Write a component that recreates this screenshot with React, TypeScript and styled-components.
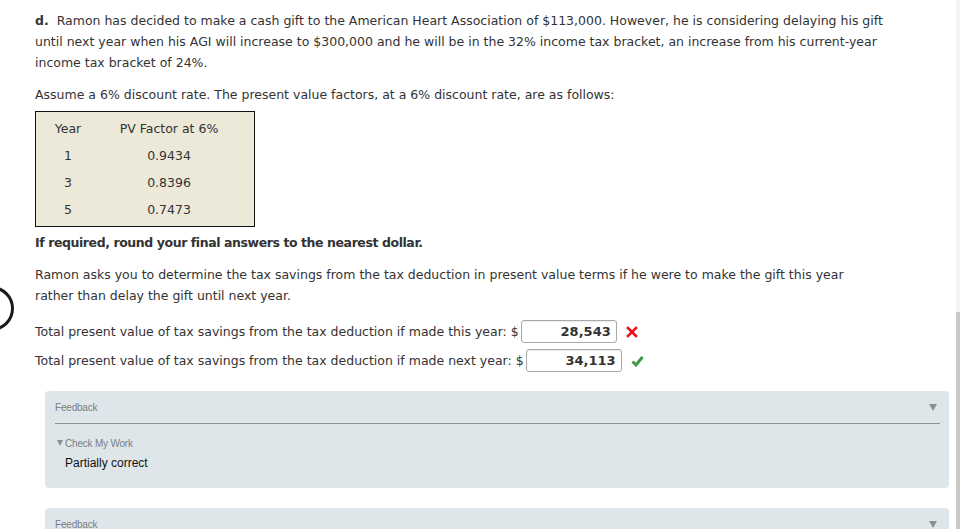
import React from "react";
import styled, { createGlobalStyle } from "styled-components";

const Global = createGlobalStyle`
  html, body { margin: 0; padding: 0; background: #ffffff; }
  body { font-family: "DejaVu Sans", Verdana, sans-serif; color: #333333; }
`;

const Page = styled.div`
  position: relative;
  width: 960px;
  height: 529px;
  overflow: hidden;
  box-sizing: border-box;
  padding: 10px 11px 0 35px;
`;

const Para = styled.p<{ $gap?: number; $bold?: boolean }>`
  margin: 0 0 ${(p) => p.$gap ?? 11}px 0;
  font-size: 12.5px;
  line-height: 21px;
  font-weight: ${(p) => (p.$bold ? 700 : 400)};
  letter-spacing: ${(p) => (p.$bold ? "-0.42px" : "0")};
  color: #333;
  width: 870px;
`;

const Table = styled.div`
  display: grid;
  grid-template-columns: 64px 138px;
  grid-auto-rows: 27px;
  width: 218px;
  padding: 3px 0;
  border: 1px solid #111;
  background: #ece9d8;
  font-size: 12.5px;
  margin-bottom: 5px;
`;

const Cell = styled.div`
  display: flex;
  align-items: center;
  justify-content: center;
`;

const AnswerRow = styled.div`
  display: flex;
  align-items: center;
  height: 29px;
  font-size: 12.5px;
`;

const Input = styled.div`
  box-sizing: border-box;
  width: 96px;
  height: 23px;
  margin-left: 2px;
  border: 1px solid #a9a9a9;
  border-radius: 3px;
  box-shadow: inset 0 1px 1px rgba(0, 0, 0, 0.08);
  display: flex;
  align-items: center;
  justify-content: flex-end;
  padding-right: 5px;
  font-weight: 700;
  font-size: 13px;
  color: #333;
  background: #fff;
`;

const Mark = styled.span`
  margin-left: 9px;
  display: flex;
  align-items: center;
`;

const Panel = styled.div`
  margin: 16px 0 20px 10px;
  background: #dfe6ea;
  border-radius: 4px;
  padding: 8px 9px 16px 10px;
  font-family: "Liberation Sans", Arial, sans-serif;
`;

const PanelHead = styled.div`
  display: flex;
  justify-content: space-between;
  align-items: center;
  height: 16px;
  font-size: 10px;
  color: #7a7f83;
  letter-spacing: -0.2px;
`;

const Caret = styled.span`
  width: 0;
  height: 0;
  border-left: 4px solid transparent;
  border-right: 4px solid transparent;
  border-top: 7px solid #8c9094;
  margin-right: 3px;
`;

const Rule = styled.div`
  height: 1px;
  background: #8e9396;
  margin: 8px 0 11px;
`;

const Sub = styled.div`
  display: flex;
  align-items: center;
  height: 16px;
  padding-left: 2px;
  font-size: 10px;
  color: #7a7f83;
  letter-spacing: -0.2px;
`;

const SmallCaret = styled.span`
  width: 0;
  height: 0;
  border-left: 3px solid transparent;
  border-right: 3px solid transparent;
  border-top: 6px solid #8c9094;
  margin-right: 2px;
`;

const Result = styled.div`
  height: 18px;
  line-height: 18px;
  font-size: 12px;
  color: #111;
  padding-left: 10px;
  margin-top: 3px;
`;

const Ring = styled.div`
  position: absolute;
  left: -31px;
  top: 286px;
  width: 39px;
  height: 39px;
  border: 3px solid #1a1a1a;
  border-radius: 50%;
`;

const Track = styled.div`
  position: absolute;
  right: 0;
  top: 0;
  width: 4px;
  height: 529px;
  background: #f3f3f3;
`;

const Thumb = styled.div`
  position: absolute;
  right: 0;
  top: 312px;
  width: 4px;
  height: 217px;
  background: #c9c9c9;
`;

const Cross = () => (
  <svg width="12" height="12" viewBox="0 0 12 12">
    <path d="M2 2 L10 10 M10 2 L2 10" stroke="#e8121e" strokeWidth="2.6" strokeLinecap="square" />
  </svg>
);

const Check = () => (
  <svg width="13" height="12" viewBox="0 0 13 12">
    <path d="M1.5 6.5 L5 10 L11.5 2" stroke="#3c9a3c" strokeWidth="2.9" fill="none" />
  </svg>
);

export default function App() {
  return (
    <>
      <Global />
      <Page>
        <Para>
          <b>d.</b>&nbsp; Ramon has decided to make a cash gift to the American Heart Association of $113,000. However, he is considering delaying his gift
          <br />
          until next year when his AGI will increase to $300,000 and he will be in the 32% income tax bracket, an increase from his current-year
          <br />
          income tax bracket of 24%.
        </Para>
        <Para $gap={6}>Assume a 6% discount rate. The present value factors, at a 6% discount rate, are as follows:</Para>
        <Table>
          <Cell>Year</Cell>
          <Cell>PV Factor at 6%</Cell>
          <Cell>1</Cell>
          <Cell>0.9434</Cell>
          <Cell>3</Cell>
          <Cell>0.8396</Cell>
          <Cell>5</Cell>
          <Cell>0.7473</Cell>
        </Table>
        <Para $bold>If required, round your final answers to the nearest dollar.</Para>
        <Para>
          Ramon asks you to determine the tax savings from the tax deduction in present value terms if he were to make the gift this year
          <br />
          rather than delay the gift until next year.
        </Para>
        <AnswerRow>
          Total present value of tax savings from the tax deduction if made this year: $
          <Input>28,543</Input>
          <Mark>
            <Cross />
          </Mark>
        </AnswerRow>
        <AnswerRow>
          Total present value of tax savings from the tax deduction if made next year: $
          <Input>34,113</Input>
          <Mark>
            <Check />
          </Mark>
        </AnswerRow>
        <Panel>
          <PanelHead>
            Feedback
            <Caret />
          </PanelHead>
          <Rule />
          <Sub>
            <SmallCaret />
            Check My Work
          </Sub>
          <Result>Partially correct</Result>
        </Panel>
        <Panel>
          <PanelHead>
            Feedback
            <Caret />
          </PanelHead>
        </Panel>
        <Ring />
        <Track />
        <Thumb />
      </Page>
    </>
  );
}
